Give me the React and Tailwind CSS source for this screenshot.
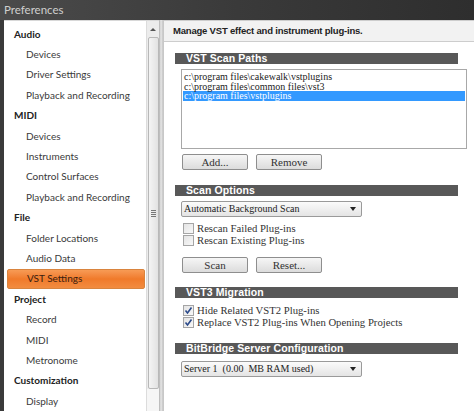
import React from 'react';

const sidebarItems = [
    { label: 'Audio', head: true },
    { label: 'Devices' },
    { label: 'Driver Settings' },
    { label: 'Playback and Recording' },
    { label: 'MIDI', head: true },
    { label: 'Devices' },
    { label: 'Instruments' },
    { label: 'Control Surfaces' },
    { label: 'Playback and Recording' },
    { label: 'File', head: true },
    { label: 'Folder Locations' },
    { label: 'Audio Data' },
    { label: 'VST Settings', active: true },
    { label: 'Project', head: true },
    { label: 'Record' },
    { label: 'MIDI' },
    { label: 'Metronome' },
    { label: 'Customization', head: true },
    { label: 'Display' },
];

const serif = "font-['Liberation_Serif',serif]";

const SectionBar = ({ title, className = '' }) => (
    <div className={`ml-[11px] mr-[16px] h-[11px] bg-[#585858] pl-[11px] flex items-center ${className}`}>
        <span className="text-white font-bold text-[10.5px] leading-none font-['Liberation_Sans',sans-serif] tracking-[0.1px]">
            {title}
        </span>
    </div>
);

const Button = ({ children }) => (
    <button className={`w-[66px] h-[16px] border border-[#8e8e8e] rounded-[2px] bg-gradient-to-b from-[#f6f6f6] to-[#dcdcdc] text-[11px] leading-none text-[#333] ${serif}`}>
        {children}
    </button>
);

const Select = ({ value }) => (
    <div className={`w-[181px] h-[16px] border border-[#9a9a9a] rounded-[2px] bg-gradient-to-b from-[#fbfbfb] to-[#e4e4e4] flex items-center justify-between pl-[2px] pr-[5px] text-[10px] leading-none text-[#222] whitespace-pre ${serif}`}>
        <span>{value}</span>
        <span className="w-0 h-0 border-l-[3px] border-r-[3px] border-t-[4px] border-l-transparent border-r-transparent border-t-[#222]" />
    </div>
);

const Check = ({ label, checked }) => (
    <div className={`flex items-center h-[12.5px] text-[10.7px] leading-none text-[#333] ${serif}`}>
        <span className="w-[11px] h-[11px] border border-[#a5a5a5] bg-gradient-to-br from-[#e4e4e4] to-[#f8f8f8] flex items-center justify-center mr-[3px]">
            {checked && (
                <svg width="9" height="9" viewBox="0 0 9 9">
                    <path d="M1.5 4.5 L3.5 7 L7.5 1.5" fill="none" stroke="#2b4a8a" strokeWidth="1.6" />
                </svg>
            )}
        </span>
        {label}
    </div>
);

export default function App() {
    return (
        <div className="w-[474px] h-[411px] overflow-hidden flex flex-col bg-[#3a3a3a]">
            <div className="h-[20px] shrink-0 bg-gradient-to-r from-[#4b4b4b] via-[#3a3a3a] to-[#2e2e2e] flex items-center pl-[4px]">
                <span className="text-[11.5px] text-[#cfcfcf] font-['Lato',sans-serif] leading-none">Preferences</span>
            </div>
            <div className="flex-1 flex pl-[4px] min-h-0">
                {/* sidebar */}
                <div className="w-[155px] shrink-0 bg-white flex border-t border-[#d8d8d8]">
                    <div className="flex-1 pt-[3px] pl-[3px] pr-[1px] font-['Lato',sans-serif]">
                        {sidebarItems.map((item, i) => (
                            <div
                                key={i}
                                className={`h-[20.4px] flex items-center text-[10px] ${
                                    item.head
                                        ? 'pl-[7px] font-bold text-[#222]'
                                        : item.active
                                        ? 'pl-[19px] text-[#3a2010] bg-gradient-to-b from-[#f79b55] via-[#f07a2a] to-[#f28c40] rounded-[2px] border border-[#d9843e]'
                                        : 'pl-[19px] text-[#3a3a3a]'
                                }`}
                            >
                                {item.label}
                            </div>
                        ))}
                    </div>
                    <div className="w-[13px] shrink-0 bg-[#ececec] border-l border-[#dcdcdc] flex flex-col items-center">
                        <div className="h-[16px] flex items-center justify-center">
                            <span className="w-0 h-0 border-l-[3px] border-r-[3px] border-b-[3px] border-l-transparent border-r-transparent border-b-[#555]" />
                        </div>
                        <div className="w-[11px] h-[352px] bg-gradient-to-r from-[#f4f4f4] to-[#e2e2e2] border border-[#b8b8b8] rounded-[2px] flex items-center justify-center">
                            <div className="flex flex-col gap-[1px]">
                                <span className="w-[5px] h-[1px] bg-[#777]" />
                                <span className="w-[5px] h-[1px] bg-[#777]" />
                                <span className="w-[5px] h-[1px] bg-[#777]" />
                                <span className="w-[5px] h-[1px] bg-[#777]" />
                            </div>
                        </div>
                        <div className="flex-1 w-full bg-[#f6f6f6]" />
                    </div>
                </div>
                <div className="w-[4px] shrink-0 bg-gradient-to-r from-[#b0b0b0] via-[#e8e8e8] to-[#c4c4c4]" />
                {/* content */}
                <div className="flex-1 bg-white border-l border-[#c8c8c8] flex flex-col">
                    <div className="h-[22px] bg-[#f2f2f2] border-b border-t border-[#cdcdcd] flex items-center pl-[9px]">
                        <span className="text-[9.5px] font-bold text-[#222] font-['Liberation_Sans',sans-serif] tracking-[-0.2px]">
                            Manage VST effect and instrument plug-ins.
                        </span>
                    </div>

                    <SectionBar title="VST Scan Paths" className="mt-[11px]" />
                    <div className={`ml-[17px] mr-[7px] mt-[5px] h-[80px] border border-[#a8a8a8] bg-white pt-[2px] px-[1px] text-[10px] leading-[9.6px] text-[#222] ${serif}`}>
                        <div className="pl-[1px]">c:\program files\cakewalk\vstplugins</div>
                        <div className="pl-[1px]">c:\program files\common files\vst3</div>
                        <div className="pl-[1px] bg-[#3399ff] text-white">c:\program files\vstplugins</div>
                    </div>
                    <div className="ml-[18px] mt-[5px] flex gap-[8px]">
                        <Button>Add...</Button>
                        <Button>Remove</Button>
                    </div>

                    <SectionBar title="Scan Options" className="mt-[15px]" />
                    <div className="ml-[17px] mt-[5px]">
                        <Select value="Automatic Background Scan" />
                    </div>
                    <div className="ml-[19px] mt-[5px]">
                        <Check label="Rescan Failed Plug-ins" />
                        <Check label="Rescan Existing Plug-ins" />
                    </div>
                    <div className="ml-[18px] mt-[10px] flex gap-[8px]">
                        <Button>Scan</Button>
                        <Button>Reset...</Button>
                    </div>

                    <SectionBar title="VST3 Migration" className="mt-[14px]" />
                    <div className="ml-[19px] mt-[6px]">
                        <Check label="Hide Related VST2 Plug-ins" checked />
                        <Check label="Replace VST2 Plug-ins When Opening Projects" checked />
                    </div>

                    <SectionBar title="BitBridge Server Configuration" className="mt-[14px]" />
                    <div className="ml-[17px] mt-[7px]">
                        <Select value="Server 1  (0.00  MB RAM used)" />
                    </div>
                </div>
            </div>
        </div>
    );
}
